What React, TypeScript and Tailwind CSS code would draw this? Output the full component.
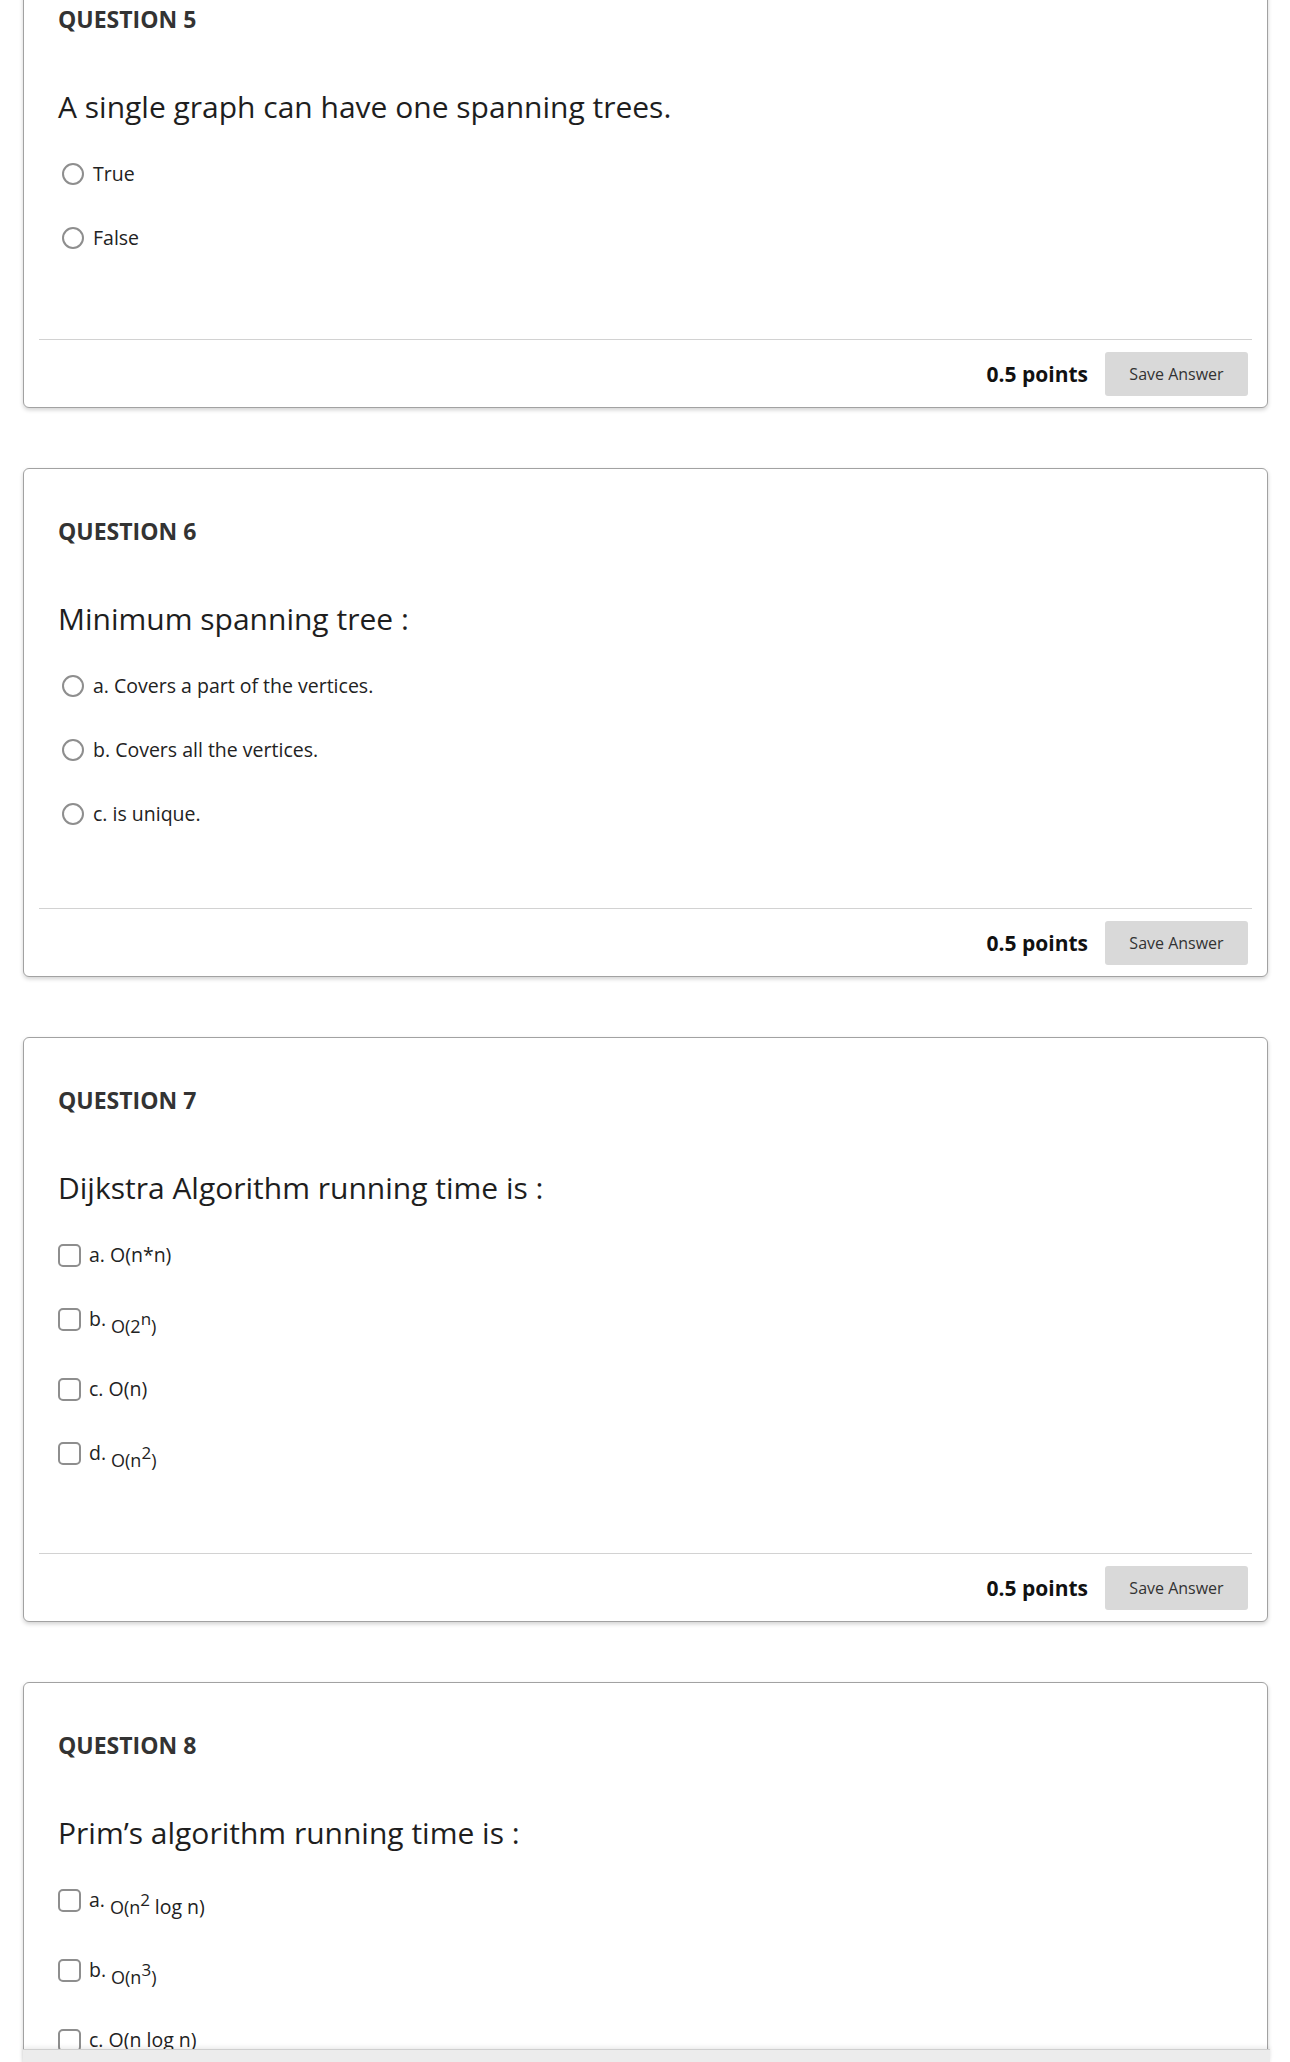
import React from "react";

type Opt = { label: string; body: React.ReactNode; sup?: boolean };

const Radio = () => (
  <span className="ml-[4px] mr-[9px] box-border inline-block h-[22px] w-[22px] shrink-0 rounded-full border-2 border-[#8e8e8e] bg-white" />
);

const Check = () => (
  <span className="mr-[8px] box-border inline-block h-[23px] w-[23px] shrink-0 rounded-[5px] border-2 border-[#8e8e8e] bg-white" />
);

function OptionRow({ opt, kind }: { opt: Opt; kind: "radio" | "check" }) {
  if (opt.sup) {
    return (
      <div className="flex h-[70px] items-center pb-[6px]">
        {kind === "radio" ? <Radio /> : <Check />}
        <span className="text-[19.5px] leading-[26px] text-[#222]">{opt.label}</span>
        <span className="relative top-[7px] ml-[5px] text-[18px] leading-[24px] text-[#222]">
          {opt.body}
        </span>
      </div>
    );
  }
  return (
    <div className="flex h-[64px] items-center">
      {kind === "radio" ? <Radio /> : <Check />}
      <span className="text-[19.5px] leading-[26px] text-[#222]">
        {opt.label}
        {opt.label ? " " : ""}
        {opt.body}
      </span>
    </div>
  );
}

function Card({
  num,
  question,
  kind,
  options,
  gapClass,
}: {
  num: number;
  question: string;
  kind: "radio" | "check";
  options: Opt[];
  gapClass: string;
}) {
  return (
    <div className="ml-[23px] w-[1245px] rounded-[6px] border border-[#a2a2a2] bg-white shadow-[0_2px_4px_rgba(0,0,0,0.18)]">
      <div className="pl-[34px] pt-[46px]">
        <div className="h-[32px] text-[23px] font-bold leading-[32px] text-[#333]">QUESTION {num}</div>
        <div className="mt-[52px] h-[40px] text-[30px] leading-[40px] text-[#1e1e1e]">{question}</div>
        <div className="mt-[15px] flex flex-col">
          {options.map((o, i) => (
            <OptionRow key={i} opt={o} kind={kind} />
          ))}
        </div>
      </div>
      <div className={gapClass} />
      <div className="mx-[15px] h-px bg-[#d2d2d2]" />
      <div className="flex items-center justify-end pb-[11px] pr-[19px] pt-[12px]">
        <span className="text-[21px] font-bold leading-[28px] text-[#111]">0.5 points</span>
        <button className="ml-[17px] h-[44px] w-[143px] rounded-[3px] bg-[#d9d9d9] text-[16px] text-[#333]">
          Save Answer
        </button>
      </div>
    </div>
  );
}

export default function App() {
  return (
    <div className="relative h-[2062px] w-full overflow-hidden bg-white font-['Open_Sans',sans-serif]">
      <div className="mt-[-44px] flex flex-col gap-[60px]">
        <Card
          num={5}
          question="A single graph can have one spanning trees."
          kind="radio"
          options={[
            { label: "", body: "True" },
            { label: "", body: "False" },
          ]}
          gapClass="h-[69px]"
        />
        <Card
          num={6}
          question="Minimum spanning tree :"
          kind="radio"
          options={[
            { label: "a.", body: "Covers a part of the vertices." },
            { label: "b.", body: "Covers all the vertices." },
            { label: "c.", body: "is unique." },
          ]}
          gapClass="h-[62px]"
        />
        <Card
          num={7}
          question="Dijkstra Algorithm running time is :"
          kind="check"
          options={[
            { label: "a.", body: "O(n*n)" },
            {
              label: "b.",
              sup: true,
              body: (
                <>
                  O(2<sup className="text-[17px]">n</sup>)
                </>
              ),
            },
            { label: "c.", body: "O(n)" },
            {
              label: "d.",
              sup: true,
              body: (
                <>
                  O(n<sup className="text-[17px]">2</sup>)
                </>
              ),
            },
          ]}
          gapClass="h-[62px]"
        />
        <Card
          num={8}
          question="Prim’s algorithm running time is :"
          kind="check"
          options={[
            {
              label: "a.",
              sup: true,
              body: (
                <>
                  O(n<sup className="text-[17px]">2</sup> <span className="text-[19.5px]">log n)</span>
                </>
              ),
            },
            {
              label: "b.",
              sup: true,
              body: (
                <>
                  O(n<sup className="text-[17px]">3</sup>)
                </>
              ),
            },
            { label: "c.", body: "O(n log n)" },
            { label: "d.", body: "O(n)" },
          ]}
          gapClass="h-[62px]"
        />
      </div>
      <div className="fixed bottom-0 left-[23px] h-[13px] w-[1247px] border-t border-[#cfcfcf] bg-[#ececec] shadow-[0_-2px_4px_rgba(0,0,0,0.08)]" />
    </div>
  );
}
